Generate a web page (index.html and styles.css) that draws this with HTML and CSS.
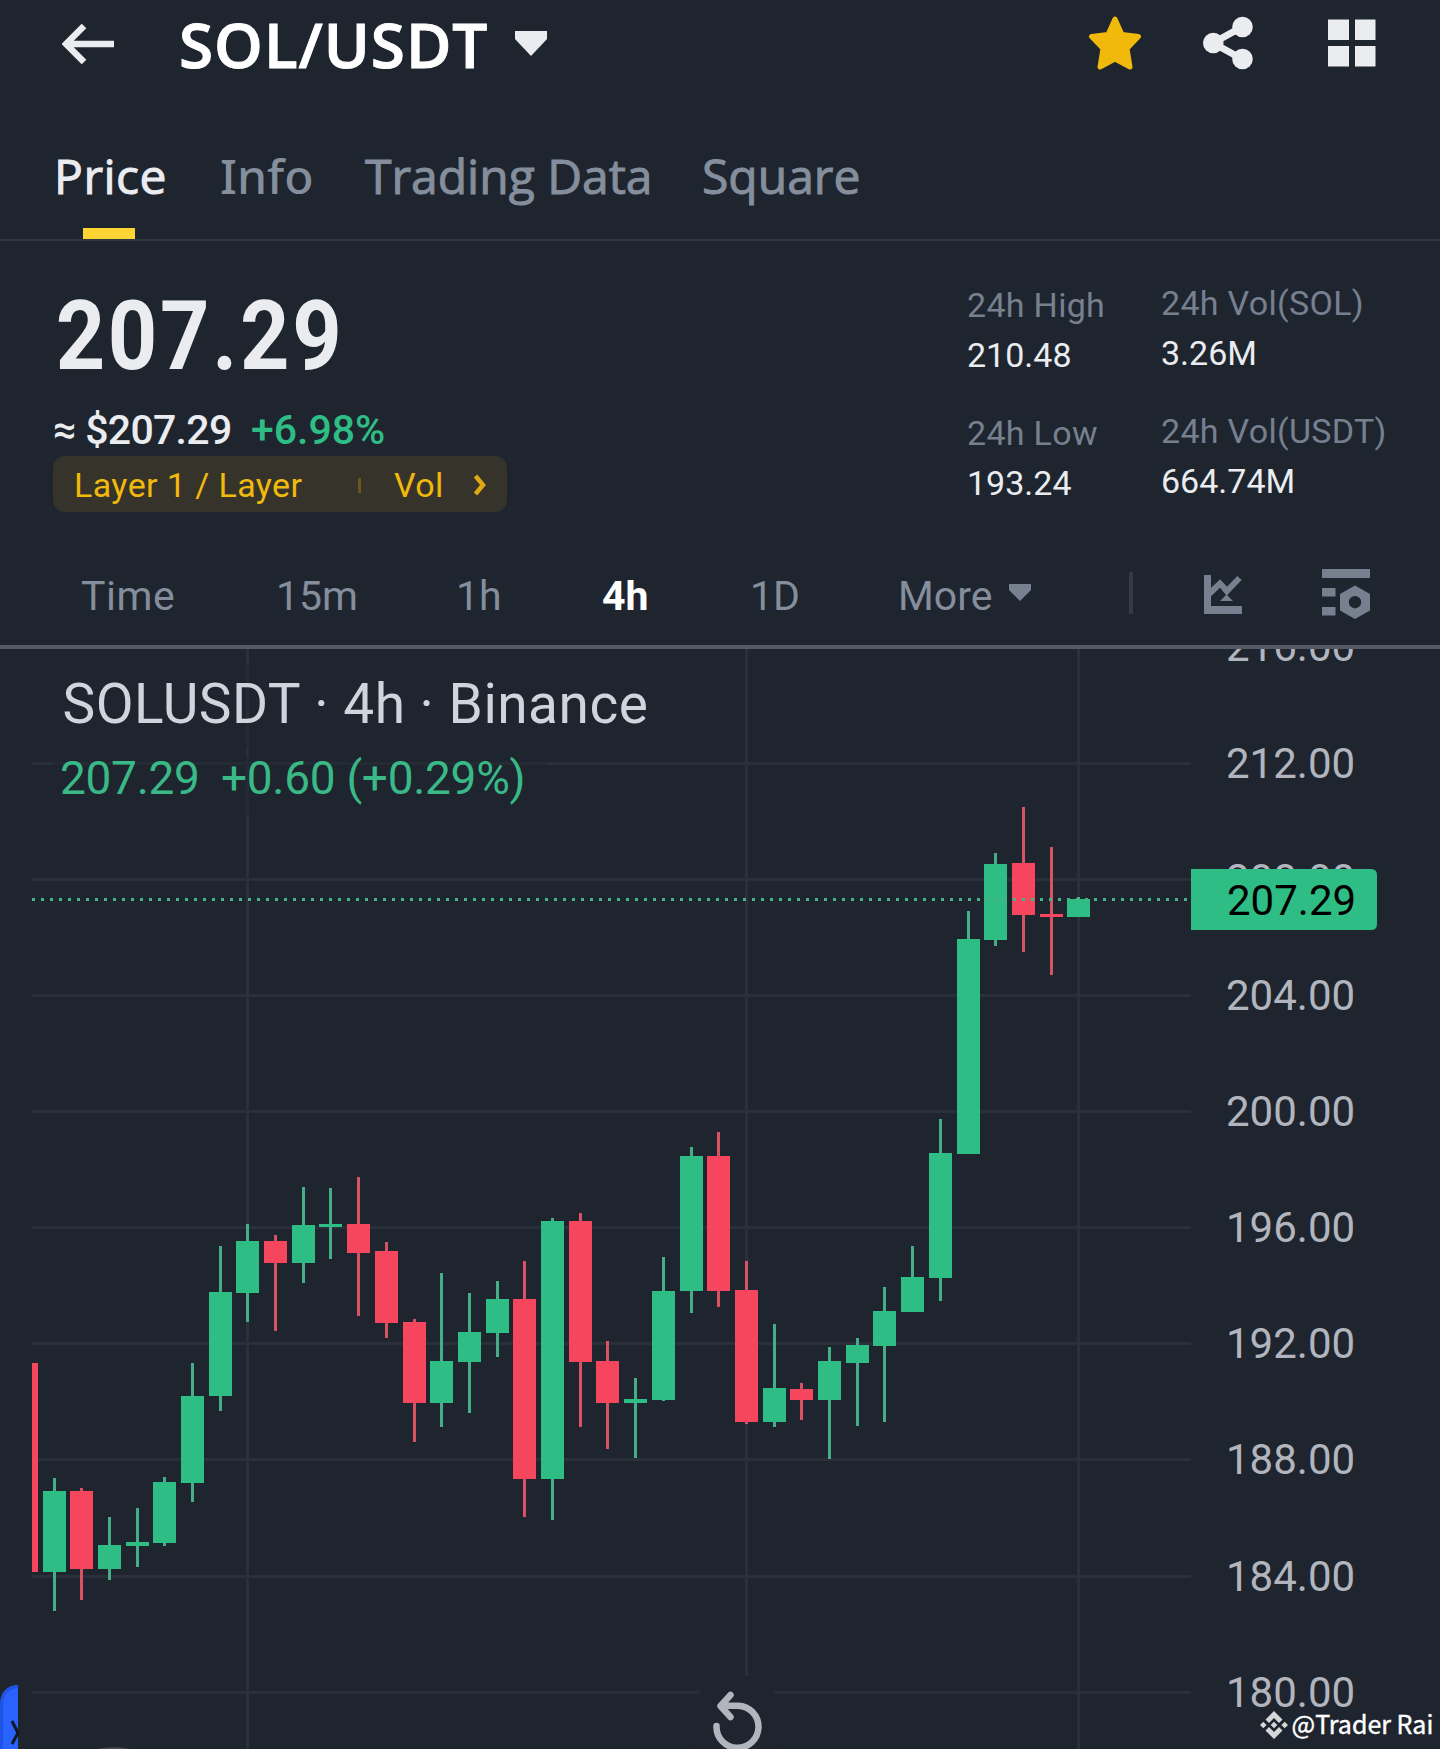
FILE: index.html
```html
<!DOCTYPE html>
<html lang="en">
<head>
    <meta charset="UTF-8">
    <meta name="viewport" content="width=device-width, initial-scale=1.0">
    <title>SOL/USDT</title>
    <link rel="stylesheet" href="styles.css">
</head>
<body>
    <header class="header">
        <svg class="back" width="52" height="40" viewBox="0 0 52 40">
            <path d="M22 2 L4 20 L22 38 M4 20 H52" fill="none" stroke="#eaecef" stroke-width="6.5"/>
        </svg>
        <h1 class="pair">SOL/USDT</h1>
        <svg class="pair-caret" width="32" height="26" viewBox="0 0 32 26">
            <path d="M0 0 H32 V8 L16 25 L0 8 Z" fill="#eaecef"/>
        </svg>
        <div class="header-icons">
            <svg width="54" height="54" viewBox="0 0 54 54">
                <path d="M27 3 L34 18.500 L50.500 20.500 L39 32.500 L42 51 L27 43 L12 51 L15 32.500 L3.500 20.500 L20 18.500 Z" fill="#f0b90b" stroke="#f0b90b" stroke-width="5" stroke-linejoin="round"/>
            </svg>
            <svg width="50" height="54" viewBox="0 0 50 54">
                <path d="M39 11 L10 27 L39 43" fill="none" stroke="#eaecef" stroke-width="7"/>
                <circle cx="39.500" cy="11" r="10.300" fill="#eaecef"/>
                <circle cx="10.300" cy="27" r="10.300" fill="#eaecef"/>
                <circle cx="39.500" cy="43" r="10.300" fill="#eaecef"/>
            </svg>
            <svg width="48" height="48" viewBox="0 0 48 48">
                <path d="M0 0.500 H21 V21 H0 Z M27 0.500 H47.500 V21 H27 Z M0 27 H21 V47.500 H0 Z M27 27 H47.500 V47.500 H27 Z" fill="#eaecef"/>
            </svg>
        </div>
    </header>

    <nav class="tabs">
        <span class="tab active">Price</span>
        <span class="tab tab-info">Info</span>
        <span class="tab">Trading Data</span>
        <span class="tab">Square</span>
    </nav>

    <section class="summary">
        <div class="quote">
            <div class="last-price">207.29</div>
            <div class="fiat">
                <span class="fiat-value">≈ $207.29</span>
                <span class="fiat-change">+6.98%</span>
            </div>
            <div class="tag">
                <span class="tag-layer">Layer 1 / Layer</span>
                <span class="tag-line"></span>
                <span class="tag-vol">Vol</span>
                <svg width="14" height="22" viewBox="0 0 14 22">
                    <path d="M1.500 2 L9 11 L1.500 20" fill="none" stroke="#e0a813" stroke-width="4.500"/>
                </svg>
            </div>
        </div>
        <div class="stats">
            <div class="stats-col">
                <div class="stat">
                    <div class="label">24h High</div>
                    <div class="value">210.48</div>
                </div>
                <div class="stat">
                    <div class="label">24h Low</div>
                    <div class="value">193.24</div>
                </div>
            </div>
            <div class="stats-col right">
                <div class="stat">
                    <div class="label">24h Vol(SOL)</div>
                    <div class="value">3.26M</div>
                </div>
                <div class="stat">
                    <div class="label">24h Vol(USDT)</div>
                    <div class="value">664.74M</div>
                </div>
            </div>
        </div>
    </section>

    <div class="intervals">
        <span class="time">Time</span>
        <span>15m</span>
        <span>1h</span>
        <span class="selected">4h</span>
        <span>1D</span>
        <span class="more">More
            <svg width="22" height="17" viewBox="0 0 22 17">
                <path d="M0 0 H22 V6 L11 17 L0 6 Z" fill="#76808f"/>
            </svg>
        </span>
        <span class="divider"></span>
        <svg width="38" height="40" viewBox="0 0 38 40">
            <path d="M0 1 H7 V32 H38 V40 H0 Z" fill="#76808f"/>
            <path d="M5 20 L16 9.500 L23 17 L35.500 4" fill="none" stroke="#76808f" stroke-width="6"/>
            <path d="M16 27 L22 21 L18 16 H27 L23 21 L29 27 Z" fill="#76808f"/>
        </svg>
        <svg width="48" height="50" viewBox="0 0 48 50">
            <path d="M0 0 H48 V9 H0 Z M0 19 H13.500 V27.500 H0 Z M0 38 H13.500 V46.500 H0 Z" fill="#76808f"/>
            <path fill-rule="evenodd" d="M33 16.500 L48 25 V41.500 L33 50 L18 41.500 V25 Z M33 27 A6.200 6.200 0 1 0 33 39.400 A6.200 6.200 0 1 0 33 27 Z" fill="#76808f"/>
        </svg>
    </div>

    <main class="chart">
        <!-- y axis starts at 645, right under the interval bar -->
        <svg id="chart" width="1440" height="1104" viewBox="0 645 1440 1104">
            <g id="grid"></g>
            <g id="candles"></g>
            <path class="last-line" d="M32 899.500 H1191"/>
            <g id="axis"></g>
            <path d="M1191 869 H1371 Q1377 869 1377 875 V924 Q1377 930 1371 930 H1191 Z" fill="#2ebd85"/>
            <text class="axis-last" x="1227" y="915">207.29</text>
            <rect class="legend-bg" x="50" y="664" width="606" height="84"/>
            <rect class="legend-bg" x="50" y="756" width="496" height="60"/>
            <text class="legend-title" x="62.500" y="723">SOLUSDT · 4h · Binance</text>
            <text class="legend-price" x="60" y="794">207.29</text>
            <text class="legend-price" x="221" y="794">+0.60 (+0.29%)</text>
            <path d="M0 645 H1440 V649 H0 Z" fill="#555b65"/>

            <path d="M0 1749 V1704 Q1 1686 18 1685 V1749 Z" fill="#2962ff"/>
            <path d="M1.500 1749 V1704 Q2.500 1688 18 1686.500" fill="none" stroke="#1e53e5" stroke-width="3"/>
            <path d="M12 1721 L18 1733 L12 1744" fill="none" stroke="#131722" stroke-width="3"/>
            <path d="M98 1750 Q114 1746 130 1750" fill="none" stroke="#434651" stroke-width="2"/>
            <circle cx="737" cy="1724" r="49" fill="#1f242e"/>
            <path class="reset" d="M716.500 1726 A21 21 0 1 0 738 1705.800 H721 M730.500 1695 L720.500 1706 L730.500 1717"/>

            <g class="mark" transform="translate(1260 1711)">
                <path d="M14 0 L22.500 8.500 L19 12 L14 7 L9 12 L5.500 8.500 Z"/>
                <path d="M14 28 L22.500 19.500 L19 16 L14 21 L9 16 L5.500 19.500 Z"/>
                <path d="M3.300 10.700 L6.600 14 L3.300 17.300 L0 14 Z M14 10.700 L17.300 14 L14 17.300 L10.700 14 Z M24.700 10.700 L28 14 L24.700 17.300 L21.400 14 Z"/>
            </g>
            <text class="author" x="1291.500" y="1734">@Trader Rai</text>
        </svg>
    </main>

    <script src="chart.js"></script>
</body>
</html>
```
FILE: styles.css
```css
body {
    margin: 0;
    width: 1440px;
    height: 1749px;
    overflow: hidden;
    background-color: #1f252f;
    color: #eaecef;
    font-family: 'Roboto', sans-serif;
}

svg {
    display: block;
    flex: none;
}

.header {
    display: flex;
    align-items: center;
    height: 86px;
    padding: 0 64px 0 62px;
}

.back {
    margin-top: 1px;
}

.pair {
    margin: 2px 0 0 65px;
    width: 336px;
    font-family: 'Open Sans', sans-serif;
    font-size: 62px;
    font-weight: 600;
    line-height: 86px;
    letter-spacing: 1px;
    color: #fff;
    white-space: nowrap;
    -webkit-text-stroke: 1px #fff;
}

.pair-caret {
    margin-top: 1px;
}

.header-icons {
    display: flex;
    align-items: center;
    margin-left: auto;
}

.header-icons svg:nth-child(2) {
    margin: 0 75px 0 61px;
}

.tabs {
    display: grid;
    grid-template-columns: 166px 145px 337px auto;
    height: 153px;
    padding-left: 54px;
    border-bottom: 2px solid #2f3641;
    font-family: 'Open Sans', sans-serif;
    font-size: 48px;
    color: #848e9c;
}

.tab {
    position: relative;
    padding-top: 60px;
    line-height: 60px;
    white-space: nowrap;
    -webkit-text-stroke: 1px currentColor;
}

.tab.active {
    color: #eaecef;
    letter-spacing: 0.5px;
}

.tab.active::after {
    content: '';
    position: absolute;
    left: 29px;
    bottom: 0;
    width: 52px;
    height: 11px;
    background-color: #fcd535;
}

.tab-info {
    font-family: 'Noto Sans', sans-serif;
    font-weight: 500;
    -webkit-text-stroke: 0;
}

.summary {
    display: flex;
    justify-content: space-between;
    height: 306px;
    padding-left: 53px;
}

.last-price {
    margin-top: 45px;
    padding-left: 3px;
    font-size: 97px;
    font-weight: 700;
    line-height: 100px;
    letter-spacing: 3px;
    transform: scaleX(0.89);
    transform-origin: left;
}

.fiat {
    display: flex;
    margin-top: 18px;
    font-size: 41px;
    font-weight: 500;
    line-height: 52px;
    white-space: nowrap;
}

.fiat-value {
    width: 198px;
    letter-spacing: -0.7px;
}

.fiat-change {
    color: #2ebd85;
}

.tag {
    display: flex;
    align-items: center;
    box-sizing: border-box;
    width: 454px;
    height: 56px;
    padding: 2px 0 0 21px;
    border-radius: 12px;
    background-color: #36332b;
    color: #f0b90b;
    font-size: 34px;
    white-space: nowrap;
}

.tag-layer {
    width: 284px;
    letter-spacing: 0.4px;
}

.tag-line {
    width: 3px;
    height: 15px;
    background-color: #6b5520;
}

.tag-vol {
    width: 80px;
    margin-left: 33px;
    letter-spacing: 0.4px;
}

.stats {
    display: flex;
    width: 473px;
    padding-top: 37px;
    font-size: 34px;
    line-height: 50px;
    white-space: nowrap;
}

.stats-col {
    width: 194px;
    padding-top: 2px;
}

.stats-col.right {
    padding-top: 0;
}

.stat {
    margin-bottom: 28px;
}

.label {
    color: #76808f;
    letter-spacing: 0.3px;
}

.intervals {
    display: grid;
    grid-template-columns: 195px 180px 146px 148px 148px 231px 75px 118px auto;
    align-items: center;
    height: 98px;
    padding-left: 81px;
    color: #848e9c;
    font-size: 41px;
    line-height: 98px;
}

.time {
    letter-spacing: 0.5px;
}

.intervals .selected {
    color: #fff;
    font-weight: 700;
}

.more {
    display: flex;
    align-items: center;
    gap: 17px;
}

.more svg {
    margin-bottom: 8px;
}

.divider {
    width: 4px;
    height: 42px;
    margin-bottom: 6px;
    background-color: #343b46;
}

.intervals > svg {
    margin-bottom: 5px;
}

.chart {
    height: 1104px;
}

.grid-line {
    fill: #2a303a;
}

.up {
    fill: #2ebd85;
}

.down {
    fill: #f6465d;
}

.wick.up {
    fill: #45ae86;
}

.wick.down {
    fill: #d85266;
}

.last-line {
    stroke: #45b489;
    stroke-width: 3;
    stroke-dasharray: 3 6;
}

.axis-label {
    fill: #b2b5be;
    font-size: 42px;
}

.axis-last {
    fill: #000;
    font-size: 42px;
}

.legend-bg {
    fill: #1f252f;
    opacity: 0.5;
}

.legend-title {
    fill: #d1d4dc;
    font-size: 55px;
    letter-spacing: 0.5px;
}

.legend-price {
    fill: #39b987;
    font-size: 46px;
    letter-spacing: -0.3px;
}

.reset {
    fill: none;
    stroke: #b2b5be;
    stroke-width: 6.5;
    stroke-linecap: round;
    stroke-linejoin: round;
}

.mark {
    fill: #d6d7d9;
}

.author {
    fill: #fff;
    font-family: 'Noto Sans CJK SC', sans-serif;
    font-size: 25px;
    stroke: #fff;
    stroke-width: 0.4;
}
```
FILE: chart.js
```js
const svgNS = 'http://www.w3.org/2000/svg';
const grid = document.getElementById('grid');
const candlesGroup = document.getElementById('candles');
const axis = document.getElementById('axis');

// x, high, low, body top, body bottom, direction
const candles = [
    [54.5, 1478, 1611, 1491, 1572, 'up'],
    [81.5, 1488, 1600, 1491, 1569, 'down'],
    [109.5, 1517, 1580, 1545, 1569, 'up'],
    [137.5, 1508, 1567, 1542, 1546, 'up'],
    [164.5, 1477, 1546, 1482, 1543, 'up'],
    [192.5, 1363, 1502, 1396, 1483, 'up'],
    [220.5, 1246, 1411, 1292, 1396, 'up'],
    [247.5, 1224, 1322, 1241, 1293, 'up'],
    [275.5, 1235, 1331, 1241, 1263, 'down'],
    [303.5, 1187, 1283, 1225, 1263, 'up'],
    [330.5, 1188, 1259, 1224, 1227, 'up'],
    [358.5, 1177, 1316, 1224, 1253, 'down'],
    [386.5, 1242, 1338, 1251, 1323, 'down'],
    [414.5, 1319, 1442, 1322, 1403, 'down'],
    [441.5, 1273, 1427, 1361, 1403, 'up'],
    [469.5, 1293, 1413, 1332, 1362, 'up'],
    [497.5, 1281, 1357, 1299, 1333, 'up'],
    [524.5, 1261, 1517, 1299, 1479, 'down'],
    [552.5, 1218, 1520, 1221, 1479, 'up'],
    [580.5, 1213, 1427, 1221, 1362, 'down'],
    [607.5, 1341, 1449, 1361, 1403, 'down'],
    [635.5, 1378, 1458, 1399, 1403, 'up'],
    [663.5, 1257, 1401, 1291, 1400, 'up'],
    [691.5, 1147, 1313, 1156, 1291, 'up'],
    [718.5, 1132, 1307, 1156, 1291, 'down'],
    [746.5, 1261, 1424, 1290, 1422, 'down'],
    [774.5, 1324, 1427, 1388, 1422, 'up'],
    [801.5, 1383, 1420, 1389, 1400, 'down'],
    [829.5, 1347, 1459, 1361, 1400, 'up'],
    [857.5, 1338, 1426, 1345, 1363, 'up'],
    [884.5, 1287, 1422, 1311, 1346, 'up'],
    [912.5, 1246, 1312, 1277, 1312, 'up'],
    [940.5, 1119, 1301, 1153, 1278, 'up'],
    [968.5, 911, 1154, 939, 1154, 'up'],
    [995.5, 853, 946, 864, 940, 'up'],
    [1023.5, 807, 952, 863, 915, 'down'],
    [1051.5, 847, 975, 914, 917, 'down'],
    [1078.5, 897, 917, 899, 917, 'up']
];

function add(parent, name, attrs, text) {
    const el = document.createElementNS(svgNS, name);
    for (const key in attrs) {
        el.setAttribute(key, attrs[key]);
    }
    if (text) el.textContent = text;
    parent.appendChild(el);
}

function drawGrid() {
    for (let price = 216; price >= 180; price -= 4) {
        const y = Math.round(762.5 + (212 - price) * 29.04);
        add(grid, 'rect', { class: 'grid-line', x: 32, y: y - 1, width: 1159, height: 3 });
        add(axis, 'text', { class: 'axis-label', x: 1226, y: y + 15 }, price.toFixed(2));
    }
    [246, 745, 1077].forEach(x => {
        add(grid, 'rect', { class: 'grid-line', x: x, y: 645, width: 3, height: 1104 });
    });
}

function drawCandles() {
    // first candle is cut off by the left edge
    add(candlesGroup, 'rect', { class: 'down', x: 32, y: 1363, width: 6, height: 209 });
    candles.forEach(([x, high, low, top, bottom, dir]) => {
        add(candlesGroup, 'rect', { class: 'wick ' + dir, x: x - 1.5, y: high, width: 3, height: low - high });
        add(candlesGroup, 'rect', { class: dir, x: x - 11.5, y: top, width: 23, height: bottom - top });
    });
}

drawGrid();
drawCandles();
```
